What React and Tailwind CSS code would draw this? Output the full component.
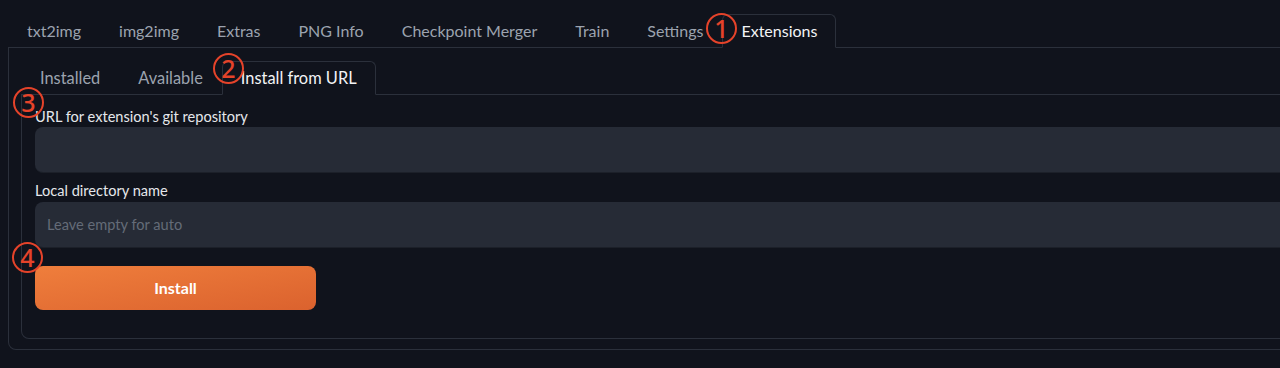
import { clsx } from 'clsx'

const TOP_TABS = ['txt2img', 'img2img', 'Extras', 'PNG Info', 'Checkpoint Merger', 'Train', 'Settings', 'Extensions']
const SUB_TABS = ['Installed', 'Available', 'Install from URL']

const FONT = { fontFamily: 'Lato, "Open Sans", sans-serif' }

function Tab({ label, active, small }) {
  return (
    <div
      className={clsx(
        'h-[34px] px-[18px] flex items-center border rounded-t-md -mb-px whitespace-nowrap',
        small ? 'text-[16.4px]' : 'text-[16px]',
        active
          ? 'border-[#2b303b] border-b-[#10131c] bg-[#10131c] text-[#f3f4f6]'
          : 'border-transparent text-[#9ca3af]'
      )}
    >
      {label}
    </div>
  )
}

function Marker({ n, className }) {
  return (
    <div
      className={clsx(
        'absolute w-[31px] h-[31px] rounded-full border-2 border-[#e5432a] text-[#e5432a] flex items-center justify-center text-[25px] font-medium leading-none',
        className
      )}
      style={{ fontFamily: '"Noto Sans", sans-serif' }}
    >
      {n}
    </div>
  )
}

export default function App() {
  return (
    <div className="relative h-[368px] w-full overflow-hidden bg-[#10131c]" style={FONT}>
      <div className="w-[1400px] pl-2 pt-[14px]">
        {/* main tabs */}
        <div className="flex border-b border-[#2b303b]">
          {TOP_TABS.map((t) => (
            <Tab key={t} label={t} active={t === 'Extensions'} />
          ))}
        </div>

        <div className="border-x border-b border-[#2b303b] rounded-b-lg pl-3 pt-[13px] pb-[10px]">
          {/* sub tabs */}
          <div className="flex border-b border-[#2b303b]">
            {SUB_TABS.map((t) => (
              <Tab key={t} label={t} small active={t === 'Install from URL'} />
            ))}
          </div>

          <div className="border-x border-b border-[#2b303b] rounded-b-lg px-[13px] pt-3 pb-[28px]">
            <label className="block text-[14.6px] leading-[20px] text-[#e5e7eb]">URL for extension's git repository</label>
            <div className="h-[46px] rounded-lg bg-[#262b36] border-b border-[#1c2029]" />

            <label className="block mt-2 text-[14.6px] leading-[20px] text-[#e5e7eb]">Local directory name</label>
            <div className="h-[46px] mt-px rounded-lg bg-[#262b36] border-b border-[#1c2029] flex items-center px-3 text-[14.6px] text-[#646b78]">
              Leave empty for auto
            </div>

            <button className="mt-[18px] w-[281px] h-[44px] rounded-lg bg-linear-to-br from-[#ef7e3c] to-[#db622e] text-white font-bold text-[16px]">
              Install
            </button>
          </div>
        </div>
      </div>

      <Marker n="1" className="left-[706px] top-[13px]" />
      <Marker n="2" className="left-[213px] top-[53px]" />
      <Marker n="3" className="left-[13px] top-[87px]" />
      <Marker n="4" className="left-[12px] top-[242px]" />
    </div>
  )
}
